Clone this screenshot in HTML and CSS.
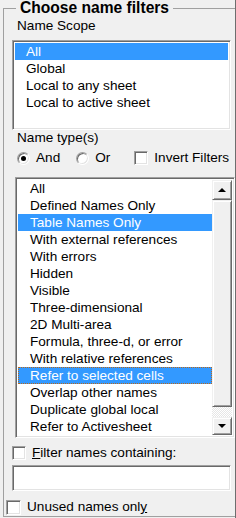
FILE: index.html
```html
<!DOCTYPE html>
<html lang="en">
<head>
<meta charset="UTF-8">
<title>Choose name filters</title>
<link rel="stylesheet" href="styles.css">
</head>
<body>
<div class="panel">
<fieldset class="frame">
    <legend>Choose name filters</legend>

    <div class="label scope-label">Name Scope</div>
    <ul class="listbox scope-list">
        <li class="selected">All</li>
        <li>Global</li>
        <li>Local to any sheet</li>
        <li>Local to active sheet</li>
    </ul>

    <div class="label type-label">Name type(s)</div>
    <div class="type-row">
        <label class="opt"><span class="radio on"></span>And</label>
        <label class="opt opt-or"><span class="radio"></span>Or</label>
        <label class="opt opt-invert"><span class="check"></span>Invert Filters</label>
    </div>

    <div class="listbox type-list">
        <ul class="items">
            <li>All</li>
            <li>Defined Names Only</li>
            <li class="selected">Table Names Only</li>
            <li>With external references</li>
            <li>With errors</li>
            <li>Hidden</li>
            <li>Visible</li>
            <li>Three-dimensional</li>
            <li>2D Multi-area</li>
            <li>Formula, three-d, or error</li>
            <li>With relative references</li>
            <li class="selected focused">Refer to selected cells</li>
            <li>Overlap other names</li>
            <li>Duplicate global local</li>
            <li>Refer to Activesheet</li>
        </ul>
        <div class="scrollbar">
            <div class="sb-btn"><span class="arrow up"></span></div>
            <div class="sb-thumb"></div>
            <div class="sb-track"></div>
            <div class="sb-btn sb-down"><span class="arrow down"></span></div>
        </div>
    </div>

    <label class="opt filter-row"><span class="check"></span><u>F</u>ilter names containing:</label>
    <div class="textbox"></div>
    <label class="opt unused-row"><span class="check"></span>Unused names onl<u>y</u></label>
</fieldset>
</div>
</body>
</html>
```

FILE: styles.css
```css
body {
    margin: 0;
    background: #f0f0f0;
    font-family: "Liberation Sans", Arial, sans-serif;
    font-size: 13.6px;
    color: #000;
}
.panel {
    width: 236px;
    height: 518px;
    box-sizing: border-box;
    border-right: 1px solid #6e6e6e;
    overflow: hidden;
}
.frame {
    box-sizing: border-box;
    height: 517px;
    margin: 0 0 0 3px;
    padding: 0;
    min-width: 0;
    border: 1px solid #a0a0a0;
    border-right: none;
}
.frame legend {
    margin-left: 12px;
    padding: 0 4px;
    font-size: 15.6px;
    font-weight: bold;
    line-height: 16px;
}
.label {
    line-height: 16px;
    margin-left: 13px;
}
.scope-label {
    margin-top: 2px;
}
.listbox {
    box-sizing: border-box;
    margin: 0;
    padding: 0;
    list-style: none;
    background: #fff;
    border: 1px solid;
    border-color: #a0a0a0 #fff #fff #a0a0a0;
    box-shadow: inset 1px 1px #696969, inset -1px -1px #e3e3e3;
}
.listbox li {
    height: 17px;
    line-height: 17px;
    white-space: nowrap;
}
.selected {
    background: #3399ff;
    color: #fff;
}
.scope-list {
    width: 219px;
    height: 90px;
    margin: 6px 0 0 8px;
    padding: 2px;
}
.scope-list li {
    padding-left: 11px;
}
.type-row {
    display: flex;
    align-items: center;
    height: 16px;
    margin: 4px 0 0 13px;
}
.opt {
    display: flex;
    align-items: center;
    line-height: 16px;
    white-space: nowrap;
}
.opt-or {
    margin-left: 16px;
}
.opt-invert {
    margin-left: 24px;
}
.radio {
    box-sizing: border-box;
    position: relative;
    width: 13px;
    height: 13px;
    margin-right: 6px;
    border-radius: 50%;
    background: #fff;
    border: 1px solid;
    border-color: #a0a0a0 #fff #fff #a0a0a0;
    box-shadow: inset 1px 1px #696969, inset -1px -1px #e3e3e3;
}
.radio.on::after {
    content: "";
    position: absolute;
    left: 3px;
    top: 3px;
    width: 5px;
    height: 5px;
    border-radius: 50%;
    background: #000;
}
.check {
    box-sizing: border-box;
    width: 14px;
    height: 14px;
    margin-right: 6px;
    background: #fff;
    border: 1px solid;
    border-color: #a0a0a0 #fff #fff #a0a0a0;
    box-shadow: inset 1px 1px #696969, inset -1px -1px #e3e3e3;
}
.type-list {
    display: flex;
    width: 220px;
    height: 261px;
    margin: 11px 0 0 11px;
    padding: 2px;
}
.items {
    flex: 1;
    margin: 0;
    padding: 0;
    list-style: none;
    overflow: hidden;
}
.items li {
    padding-left: 12px;
}
.focused {
    outline: 1px dotted #b8681c;
    outline-offset: -1px;
}
.scrollbar {
    display: flex;
    flex-direction: column;
    width: 20px;
}
.sb-btn,
.sb-thumb {
    box-sizing: border-box;
    background: #f0f0f0;
    border: 1px solid;
    border-color: #f0f0f0 #696969 #696969 #f0f0f0;
    box-shadow: inset 1px 1px #fff, inset -1px -1px #a0a0a0;
}
.sb-btn {
    display: flex;
    align-items: center;
    justify-content: center;
    height: 20px;
}
.sb-down {
    height: 18px;
}
.sb-thumb {
    height: 209px;
}
.sb-track {
    height: 10px;
    background: repeating-conic-gradient(#fff 0 25%, #e6e6e6 0 50%) 0 0 / 2px 2px;
}
.arrow {
    width: 0;
    height: 0;
    border-left: 4px solid transparent;
    border-right: 4px solid transparent;
}
.arrow.up {
    border-bottom: 4px solid #000;
}
.arrow.down {
    border-top: 4px solid #000;
}
.filter-row {
    margin: 7px 0 0 8px;
}
.textbox {
    box-sizing: border-box;
    width: 219px;
    height: 26px;
    margin: 4px 0 0 8px;
    background: #fff;
    border: 1px solid;
    border-color: #a0a0a0 #fff #fff #a0a0a0;
    box-shadow: inset 1px 1px #696969, inset -1px -1px #e3e3e3;
}
.unused-row {
    margin: 8px 0 0 2px;
}
.unused-row .check {
    width: 15px;
    height: 15px;
}
```
